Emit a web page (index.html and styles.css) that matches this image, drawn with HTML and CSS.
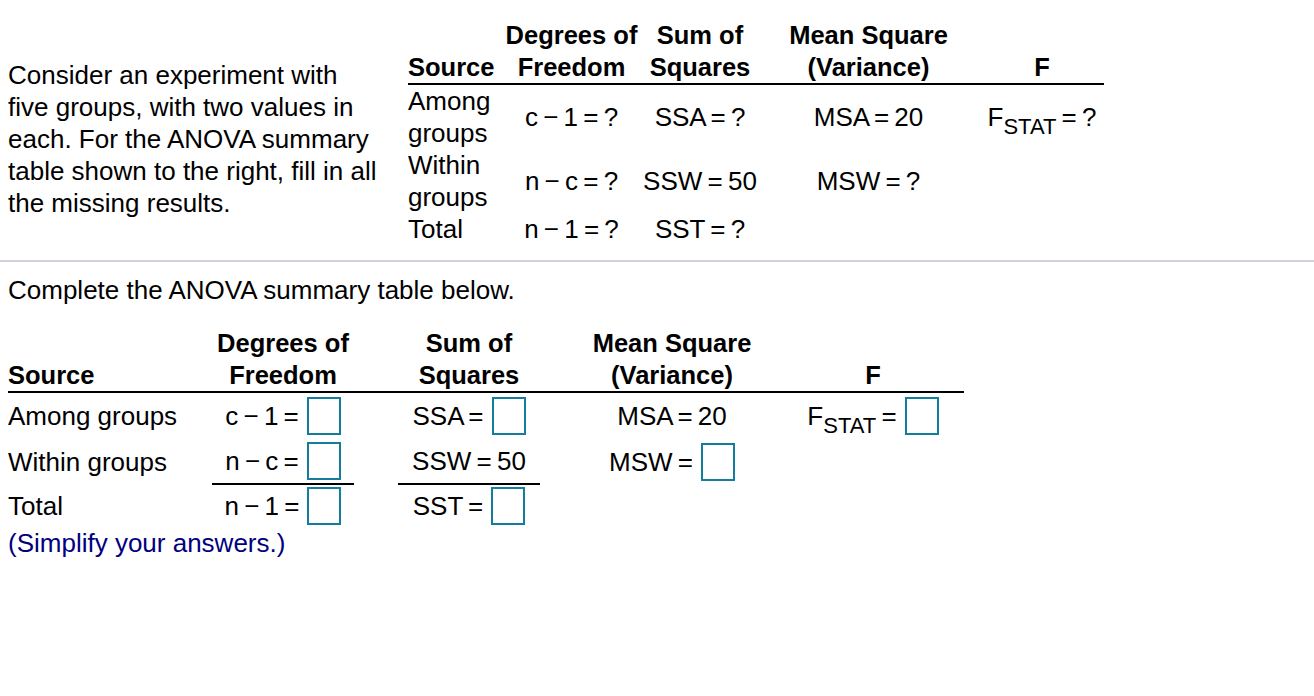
FILE: index.html
```html
<!DOCTYPE html>
<html lang="en">
<head>
<meta charset="utf-8">
<title>ANOVA summary table</title>
<link rel="stylesheet" href="styles.css">
</head>
<body>
<div class="page">
  <section class="intro">
    <p class="prompt">Consider an experiment with five groups, with two values in each. For the ANOVA summary table shown to the right, fill in all the missing results.</p>
    <div class="given">
      <div class="h h-src">Source</div>
      <div class="h">Degrees of<br>Freedom</div>
      <div class="h">Sum of<br>Squares</div>
      <div class="h">Mean Square<br>(Variance)</div>
      <div class="h">F</div>

      <div class="src">Among groups</div>
      <div class="val"><span>c − 1 = ?</span></div>
      <div class="val"><span>SSA = ?</span></div>
      <div class="val"><span>MSA = 20</span></div>
      <div class="val"><span>F<sub class="sub">STAT</sub> = ?</span></div>

      <div class="src">Within groups</div>
      <div class="val"><span>n − c = ?</span></div>
      <div class="val"><span>SSW = 50</span></div>
      <div class="val"><span>MSW = ?</span></div>
      <div class="val"></div>

      <div class="src">Total</div>
      <div class="val"><span>n − 1 = ?</span></div>
      <div class="val"><span>SST = ?</span></div>
      <div class="val"></div>
      <div class="val"></div>
    </div>
  </section>

  <hr class="sep">

  <section class="task">
    <p class="lead">Complete the ANOVA summary table below.</p>
    <div class="answer">
      <div class="ah ah-src">Source</div>
      <div class="ah">Degrees of<br>Freedom</div>
      <div class="ah">Sum of<br>Squares</div>
      <div class="ah">Mean Square<br>(Variance)</div>
      <div class="ah">F</div>

      <div class="ac ac-src">Among groups</div>
      <div class="ac"><span>c − 1 =</span><span class="box"></span></div>
      <div class="ac"><span>SSA =</span><span class="box"></span></div>
      <div class="ac"><span>MSA = 20</span></div>
      <div class="ac"><span>F<sub class="sub">STAT</sub> =</span><span class="box"></span></div>

      <div class="ac ac-src">Within groups</div>
      <div class="ac ac-sum"><span>n − c =</span><span class="box"></span></div>
      <div class="ac ac-sum"><span>SSW = 50</span></div>
      <div class="ac"><span>MSW =</span><span class="box"></span></div>
      <div class="ac"></div>

      <div class="ac ac-src">Total</div>
      <div class="ac"><span>n − 1 =</span><span class="box"></span></div>
      <div class="ac"><span>SST =</span><span class="box"></span></div>
      <div class="ac"></div>
      <div class="ac"></div>
    </div>
    <p class="note">(Simplify your answers.)</p>
  </section>
</div>
</body>
</html>
```

FILE: styles.css
```css
html, body {
  margin: 0;
  padding: 0;
  background: #ffffff;
}

body {
  font-family: "Liberation Sans", Arial, Helvetica, sans-serif;
  font-size: 26px;
  line-height: 32px;
  color: #000000;
}

.page {
  padding-top: 8px;
}

/* ---------- top section ---------- */
.intro {
  display: flex;
  align-items: flex-start;
  gap: 28px;
  padding: 11px 8px 0 8px;
}

.prompt {
  margin: 40px 0 0 0;
  width: 372px;
  flex: 0 0 372px;
}

.given {
  display: grid;
  grid-template-columns: 92px 143px 114px 223px 124px;
}

.h {
  font-size: 25.5px;
  font-weight: bold;
  text-align: center;
  align-self: end;
  border-bottom: 2px solid #000;
  white-space: nowrap;
}

.h-src {
  text-align: left;
}

.src {
  text-align: left;
  line-height: 32px;
}

.val {
  display: flex;
  align-items: center;
  justify-content: center;
  white-space: nowrap;
  word-spacing: -2px;
}

.sub {
  font-size: 22px;
  vertical-align: -8px;
  line-height: 0;
  word-spacing: normal;
}

/* ---------- separator ---------- */
.sep {
  margin: 15px 0 0 0;
  border: 0;
  height: 2px;
  background: #cfd3df;
}

/* ---------- bottom section ---------- */
.task {
  padding: 0 8px;
}

.lead {
  margin: 12px 0 0 0;
}

.answer {
  margin-top: 21px;
  display: grid;
  grid-template-columns: 182px 186px 186px 220px 182px;
  grid-template-rows: auto 46px 46px 42px;
  width: 956px;
}

.ah {
  font-size: 25.5px;
  font-weight: bold;
  text-align: center;
  align-self: end;
  border-bottom: 2px solid #000;
  white-space: nowrap;
}

.ah-src {
  text-align: left;
}

.ac {
  display: flex;
  align-items: center;
  justify-content: center;
  white-space: nowrap;
  word-spacing: -2px;
}

.ac-src {
  justify-content: flex-start;
  word-spacing: normal;
}

.ac-sum {
  margin: 0 22px;
  border-bottom: 2px solid #000;
}

.box {
  display: inline-block;
  box-sizing: border-box;
  width: 34px;
  height: 38px;
  margin-left: 8px;
  border: 2px solid #137d9b;
  background: #ffffff;
}

.note {
  margin: 0;
  color: #000080;
}
```
